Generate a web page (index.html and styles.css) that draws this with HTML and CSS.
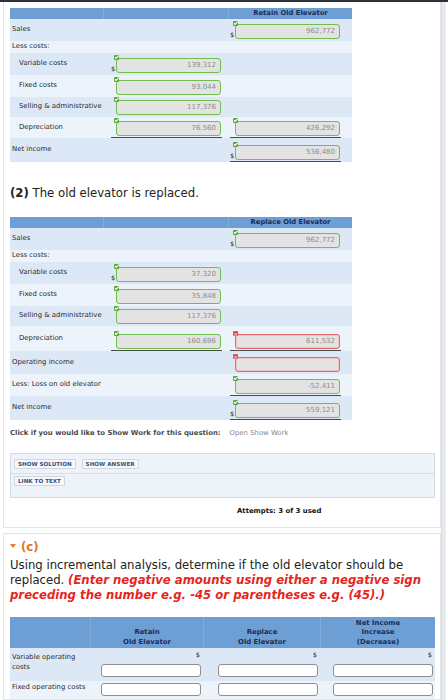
FILE: index.html
```html
<!DOCTYPE html>
<html>
<head>
<meta charset="utf-8">
<link rel="stylesheet" href="styles.css">
</head>
<body>
<div class="topbar"></div>
<div class="page">
  <div class="main">
    <section class="panel p1">
      <div class="tbl">
        <div class="row hdr"><div class="hc"></div><div class="hc"></div><div class="hc ht">Retain Old Elevator</div></div>
        <div class="row dk h22"><div class="lbl">Sales</div><div></div><div class="c r"><span class="f"><span class="dol">$</span><span class="inp ok">962,772</span></span></div></div>
        <div class="row lt h12"><div class="lbl">Less costs:</div><div></div><div></div></div>
        <div class="row dk h22"><div class="lbl ind">Variable costs</div><div class="c m"><span class="f"><span class="dol">$</span><span class="inp ok">139,312</span></span></div><div></div></div>
        <div class="row lt h22"><div class="lbl ind">Fixed costs</div><div class="c m"><span class="f"><span class="dol"></span><span class="inp ok">93,044</span></span></div><div></div></div>
        <div class="row dk h20"><div class="lbl ind">Selling &amp; administrative</div><div class="c m"><span class="f"><span class="dol"></span><span class="inp ok">117,376</span></span></div><div></div></div>
        <div class="row lt h21"><div class="lbl ind">Depreciation</div><div class="c m bt"><span class="f ul"><span class="dol"></span><span class="inp ok">76,560</span></span></div><div class="c r bt"><span class="f ul"><span class="dol"></span><span class="inp ok">426,292</span></span></div></div>
        <div class="row dk h24"><div class="lbl">Net income</div><div></div><div class="c r bt"><span class="f ul2"><span class="dol">$</span><span class="inp ok">536,480</span></span></div></div>
      </div>

      <h2 class="part"><b>(2)</b> The old elevator is replaced.</h2>

      <div class="tbl">
        <div class="row hdr"><div class="hc"></div><div class="hc"></div><div class="hc ht">Replace Old Elevator</div></div>
        <div class="row dk h22"><div class="lbl">Sales</div><div></div><div class="c r"><span class="f"><span class="dol">$</span><span class="inp ok">962,772</span></span></div></div>
        <div class="row lt h12"><div class="lbl">Less costs:</div><div></div><div></div></div>
        <div class="row dk h22"><div class="lbl ind">Variable costs</div><div class="c m"><span class="f"><span class="dol">$</span><span class="inp ok">37,320</span></span></div><div></div></div>
        <div class="row lt h22"><div class="lbl ind">Fixed costs</div><div class="c m"><span class="f"><span class="dol"></span><span class="inp ok">35,848</span></span></div><div></div></div>
        <div class="row dk h20"><div class="lbl ind">Selling &amp; administrative</div><div class="c m"><span class="f"><span class="dol"></span><span class="inp ok">117,376</span></span></div><div></div></div>
        <div class="row lt h25"><div class="lbl ind">Depreciation</div><div class="c m bt"><span class="f ul"><span class="dol"></span><span class="inp ok">160,696</span></span></div><div class="c r bt"><span class="f ul"><span class="dol"></span><span class="inp bad">611,532</span></span></div></div>
        <div class="row dk h23"><div class="lbl">Operating income</div><div></div><div class="c r"><span class="f"><span class="dol"></span><span class="inp bad"></span></span></div></div>
        <div class="row lt h22"><div class="lbl">Less: Loss on old elevator</div><div></div><div class="c r bt"><span class="f ul"><span class="dol"></span><span class="inp ok">-52,411</span></span></div></div>
        <div class="row dk h24"><div class="lbl">Net income</div><div></div><div class="c r bt"><span class="f ul2"><span class="dol">$</span><span class="inp ok">559,121</span></span></div></div>
      </div>

      <p class="showwork"><b>Click if you would like to Show Work for this question:</b><span class="open">Open Show Work</span></p>

      <div class="btnbox">
        <div class="btnrow"><span class="btn">Show Solution</span><span class="btn">Show Answer</span></div>
        <div class="btnrow last"><span class="btn">Link to Text</span></div>
      </div>

      <p class="attempts">Attempts: 3 of 3 used</p>
    </section>

    <section class="panel p2">
      <div class="qhead"><span class="tri"></span><span class="qc">(c)</span></div>
      <p class="qtext">Using incremental analysis, determine if the old elevator should be replaced. <em>(Enter negative amounts using either a negative sign preceding the number e.g. -45 or parentheses e.g. (45).)</em></p>

      <div class="tbl3">
        <div class="row3 hdr3"><div class="hc"></div><div class="hc">Retain<br>Old Elevator</div><div class="hc">Replace<br>Old Elevator</div><div class="hc">Net Income<br>Increase<br>(Decrease)</div></div>
        <div class="row3 dk r1"><div class="lbl3">Variable operating<br>costs</div><div class="c3"><span class="d3">$</span><span class="inp3"></span></div><div class="c3"><span class="d3">$</span><span class="inp3"></span></div><div class="c3"><span class="d3">$</span><span class="inp3"></span></div></div>
        <div class="row3 lt r2"><div class="lbl3">Fixed operating costs</div><div class="c3"><span class="inp3"></span></div><div class="c3"><span class="inp3"></span></div><div class="c3"><span class="inp3"></span></div></div>
      </div>
    </section>
  </div>
  <div class="scroll"></div>
</div>
</body>
</html>
```

FILE: styles.css
```css
* { box-sizing: border-box; }
html, body { margin: 0; padding: 0; background: #fff; }
body { font-family: "DejaVu Sans", Verdana, sans-serif; color: #222; width: 448px; height: 700px; overflow: hidden; }

.topbar { height: 2px; background: #2e3038; }
.page { display: flex; }
.main { width: 441px; padding-left: 3px; }
.scroll { width: 5px; background: #e6e9ee; border-left: 1px solid #d8dce2; height: 698px; }

.panel { border: 1px solid #e1e5ea; background: #fff; padding-left: 6px; padding-right: 5px; }
.p1 { border-top: none; padding-top: 6px; padding-bottom: 10px; }
.p2 { margin-top: 5px; padding-top: 6px; }

/* tables 1 and 2 */
.tbl { width: 342px; }
.row { display: grid; grid-template-columns: 93px 125px 124px; }
.hdr { height: 11px; background: #6e9fd4; }
.hc { border-left: 1px solid #7faadb; }
.hc:first-child { border-left: none; }
.ht { font-size: 6.8px; font-weight: bold; color: #1d2c55; text-align: center; line-height: 11px; }
.dk { background: #dde8f6; }
.lt { background: #edf3fb; }
.h12 { height: 12px; }
.h20 { height: 20px; }
.h21 { height: 21px; }
.h22 { height: 22px; }
.h23 { height: 23px; }
.h24 { height: 24px; }
.h25 { height: 25px; }

.lbl { font-size: 6.9px; color: #2a2a2a; padding-left: 2px; display: flex; align-items: center; padding-bottom: 2px; white-space: nowrap; }
.lbl.ind { padding-left: 9px; }

.c { display: flex; align-items: flex-end; padding-bottom: 1px; }
.c.bt { padding-bottom: 0; }
.m { padding-left: 8px; }
.r { padding-left: 2px; }
.f { display: inline-flex; align-items: flex-end; }
.f.ul { border-bottom: 1px solid #4a4a4a; padding-right: 1px; }
.f.ul2 { border-bottom: 1.5px solid #4a4a4a; padding-right: 1px; }
.dol { width: 4px; font-size: 6.5px; color: #333; line-height: 7px; margin-bottom: 1px; }

.inp { position: relative; display: block; width: 105px; height: 15px; margin: 0 0 1px 1px; border-radius: 3px; background: #e3e3e3; font-size: 7px; color: #8c8c8c; text-align: right; padding-right: 4px; line-height: 12px; }
.inp.ok { border: 1.5px solid #71bd4d; }
.inp.bad { border: 1.5px solid #e36a6a; box-shadow: inset 0 0 0 1px #f4c2c2; }
.inp::before { content: ""; position: absolute; left: -3px; top: -4px; width: 5px; height: 5px; border-radius: 1px; }
.inp.ok::before { background: #5aa93a; }
.inp.bad::before { background: #e15050; }
.inp.ok::after { content: ""; position: absolute; left: -2px; top: -3.5px; width: 2.5px; height: 1.3px; border-left: 1px solid #fff; border-bottom: 1px solid #fff; transform: rotate(-45deg); }
.inp.bad::after { content: "×"; position: absolute; left: -3px; top: -4.5px; width: 5px; font-size: 5px; line-height: 6px; text-align: center; color: #fff; }

.part { font-size: 11.7px; font-weight: normal; line-height: 14px; margin: 24px 0 17px 0; color: #222; }
.part b { font-weight: bold; }

.showwork { margin: 7px 0 0 0; font-size: 6.9px; line-height: 12px; color: #4a4a4a; white-space: nowrap; }
.showwork b { font-weight: bold; }
.open { margin-left: 9px; color: #8a8a8a; }

.btnbox { margin-top: 14px; width: 425px; border: 1px solid #d3dbe5; background: #eef3fa; }
.btnrow { height: 20px; display: flex; align-items: center; gap: 6px; padding-left: 3px; border-bottom: 1px solid #d8dfe8; }
.btnrow.last { height: 23px; border-bottom: none; align-items: flex-start; padding-top: 2px; }
.btn { display: inline-block; height: 10px; padding: 0 3px; border: 1px solid #cfd6df; border-radius: 1px; background: #f6f8fb; font-size: 5.6px; font-weight: bold; text-transform: uppercase; color: #34507f; line-height: 8px; }

.attempts { margin: 7px 0 0 227px; font-size: 6.9px; font-weight: bold; line-height: 12px; color: #111; }

.qhead { display: flex; align-items: center; height: 14px; gap: 5px; }
.tri { width: 0; height: 0; border-left: 3.5px solid transparent; border-right: 3.5px solid transparent; border-top: 4px solid #ec7a2c; margin-top: -3px; }
.qc { font-size: 11.7px; font-weight: bold; color: #e47327; }
.qtext { margin: 4px 0 0 0; font-size: 11.7px; line-height: 15px; color: #222; }
.qtext em { color: #e52620; font-weight: bold; font-style: italic; }

.tbl3 { margin-top: 14px; width: 425px; }
.row3 { display: grid; grid-template-columns: 80px 113px 117px 115px; }
.hdr3 { height: 31px; background: #6e9fd4; }
.hdr3 .hc { font-size: 6.9px; font-weight: bold; color: #1d2c55; text-align: center; line-height: 9.5px; display: flex; align-items: flex-end; justify-content: center; padding-bottom: 1px; }
.r1 { height: 33px; }
.r2 { height: 18px; }
.lbl3 { font-size: 6.9px; color: #2a2a2a; line-height: 10px; padding-left: 2px; white-space: nowrap; }
.r1 .lbl3 { padding-top: 4px; }
.r2 .lbl3 { padding-top: 1px; }
.c3 { display: flex; flex-direction: column; align-items: flex-end; padding-right: 2px; }
.r1 .c3 { padding-top: 3px; }
.r2 .c3 { padding-top: 2px; }
.d3 { font-size: 6.5px; line-height: 8px; color: #333; margin-bottom: 5px; padding-right: 1px; }
.inp3 { display: block; width: 100px; height: 13px; border: 1px solid #8f8f8f; border-radius: 3px; background: #fff; }
```
